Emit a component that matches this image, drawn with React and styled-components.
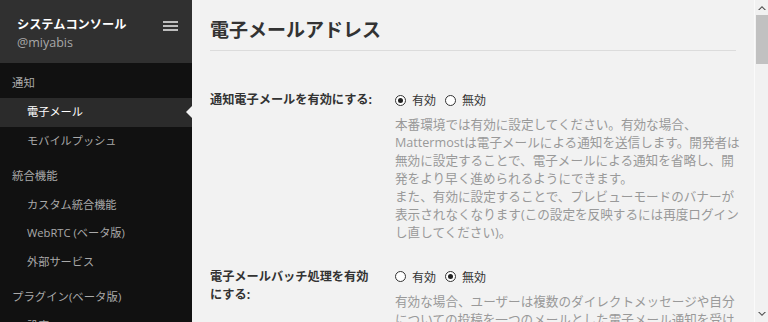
import React from "react";
import styled, { createGlobalStyle } from "styled-components";

const Global = createGlobalStyle`
  html, body { margin: 0; padding: 0; }
  body { font-family: "Open Sans", "Noto Sans CJK JP", sans-serif; background: #f2f2f2; }
  * { box-sizing: border-box; }
`;

const Shell = styled.div`
  display: flex;
  width: 768px;
  height: 322px;
  overflow: hidden;
`;

const Sidebar = styled.aside`
  width: 192px;
  flex: none;
  display: flex;
  flex-direction: column;
  background: #111111;
`;

const SideHeader = styled.div`
  height: 63px;
  flex: none;
  background: #303030;
  display: flex;
  justify-content: space-between;
  padding: 16px 14px 0 17px;
`;

const Brand = styled.div`
  display: flex;
  flex-direction: column;
`;

const BrandTitle = styled.div`
  color: #ffffff;
  font-weight: 700;
  font-size: 12.2px;
  line-height: 18px;
`;

const BrandUser = styled.div`
  color: #a8a8a8;
  font-size: 12.5px;
  line-height: 18px;
`;

const Burger = styled.div`
  margin-top: 5px;
  width: 15px;
  display: flex;
  flex-direction: column;
  gap: 2px;
  span {
    display: block;
    height: 2px;
    background: #bdbdbd;
  }
`;

const Nav = styled.nav`
  padding-top: 5px;
  display: flex;
  flex-direction: column;
`;

const Section = styled.div`
  margin-bottom: 5.5px;
`;

const SectionTitle = styled.div`
  height: 30px;
  line-height: 30px;
  padding-left: 12px;
  color: #a9a9a9;
  font-size: 11.4px;
`;

const Item = styled.div`
  position: relative;
  height: 28.5px;
  line-height: 28.5px;
  padding-left: 27px;
  font-size: 11.2px;
  color: ${(p) => (p.$active ? "#ffffff" : "#a9a9a9")};
  background: ${(p) => (p.$active ? "#2b2b2b" : "transparent")};
  ${(p) =>
    p.$active &&
    `
    &::after {
      content: "";
      position: absolute;
      right: 0;
      top: 8px;
      border-style: solid;
      border-width: 6.5px 6px 6.5px 0;
      border-color: transparent #f2f2f2 transparent transparent;
    }
  `}
`;

const Main = styled.main`
  flex: 1;
  min-width: 0;
  padding: 0 18px;
  background: #f2f2f2;
`;

const PageTitle = styled.h1`
  margin: 0;
  padding: 17px 0 7px;
  font-size: 19px;
  line-height: 26px;
  font-weight: 700;
  color: #333333;
  border-bottom: 1px solid #dcdcdc;
`;

const Settings = styled.div`
  padding-top: 40px;
  display: flex;
  flex-direction: column;
  gap: 25.5px;
`;

const Setting = styled.div`
  display: grid;
  grid-template-columns: 185px 1fr;
`;

const Label = styled.div`
  padding-right: 20px;
  font-size: 12.2px;
  font-weight: 700;
  line-height: 18.5px;
  color: #333333;
`;

const Control = styled.div`
  display: flex;
  flex-direction: column;
  margin-right: -14px;
`;

const Radios = styled.div`
  display: flex;
  align-items: center;
  height: 18px;
  gap: 9px;
`;

const RadioOption = styled.label`
  display: flex;
  align-items: center;
  gap: 6px;
  font-size: 12px;
  color: #333333;
`;

const RadioDot = styled.span`
  width: 11px;
  height: 11px;
  border-radius: 50%;
  border: 1px solid #333333;
  background: #ffffff;
  display: flex;
  align-items: center;
  justify-content: center;
  &::after {
    content: "";
    width: 5px;
    height: 5px;
    border-radius: 50%;
    background: ${(p) => (p.$checked ? "#222222" : "transparent")};
  }
`;

const Help = styled.div`
  margin-top: 7px;
  font-size: 12.6px;
  line-height: 18px;
  color: #999999;
`;

const Scrollbar = styled.div`
  width: 14px;
  flex: none;
  background: #f1f1f1;
  border-left: 1px solid #fafafa;
  display: flex;
  flex-direction: column;
  align-items: center;
`;

const Arrow = styled.div`
  height: 15px;
  display: flex;
  align-items: center;
  justify-content: center;
`;

const Thumb = styled.div`
  width: 12px;
  height: 49px;
  background: #c1c1c1;
`;

const Spacer = styled.div`
  flex: 1;
`;

function Radio({ checked, children }) {
  return (
    <RadioOption>
      <RadioDot $checked={checked} />
      {children}
    </RadioOption>
  );
}

export default function App() {
  return (
    <>
      <Global />
      <Shell>
        <Sidebar>
          <SideHeader>
            <Brand>
              <BrandTitle>システムコンソール</BrandTitle>
              <BrandUser>@miyabis</BrandUser>
            </Brand>
            <Burger>
              <span />
              <span />
              <span />
            </Burger>
          </SideHeader>
          <Nav>
            <Section>
              <SectionTitle>通知</SectionTitle>
              <Item $active>電子メール</Item>
              <Item>モバイルプッシュ</Item>
            </Section>
            <Section>
              <SectionTitle>統合機能</SectionTitle>
              <Item>カスタム統合機能</Item>
              <Item>WebRTC (ベータ版)</Item>
              <Item>外部サービス</Item>
            </Section>
            <Section>
              <SectionTitle>プラグイン(ベータ版)</SectionTitle>
              <Item>設定</Item>
            </Section>
          </Nav>
        </Sidebar>
        <Main>
          <PageTitle>電子メールアドレス</PageTitle>
          <Settings>
            <Setting>
              <Label>通知電子メールを有効にする:</Label>
              <Control>
                <Radios>
                  <Radio checked>有効</Radio>
                  <Radio>無効</Radio>
                </Radios>
                <Help>
                  本番環境では有効に設定してください。有効な場合、
                  <br />
                  Mattermostは電子メールによる通知を送信します。開発者は
                  <br />
                  無効に設定することで、電子メールによる通知を省略し、開
                  <br />
                  発をより早く進められるようにできます。
                  <br />
                  また、有効に設定することで、プレビューモードのバナーが
                  <br />
                  表示されなくなります(この設定を反映するには再度ログイン
                  <br />
                  し直してください)。
                </Help>
              </Control>
            </Setting>
            <Setting>
              <Label>電子メールバッチ処理を有効にする:</Label>
              <Control>
                <Radios>
                  <Radio>有効</Radio>
                  <Radio checked>無効</Radio>
                </Radios>
                <Help>
                  有効な場合、ユーザーは複数のダイレクトメッセージや自分
                  <br />
                  についての投稿を一つのメールとした電子メール通知を受け
                  <br />
                  取ることができます。
                </Help>
              </Control>
            </Setting>
          </Settings>
        </Main>
        <Scrollbar>
          <Arrow>
            <svg width="8" height="5" viewBox="0 0 8 5">
              <path d="M0 5 L4 1 L8 5 L6.5 5 L4 2.5 L1.5 5 Z" fill="#505050" />
            </svg>
          </Arrow>
          <Thumb />
          <Spacer />
          <Arrow>
            <svg width="8" height="5" viewBox="0 0 8 5">
              <path d="M0 0 L4 4 L8 0 L6.5 0 L4 2.5 L1.5 0 Z" fill="#505050" />
            </svg>
          </Arrow>
        </Scrollbar>
      </Shell>
    </>
  );
}
